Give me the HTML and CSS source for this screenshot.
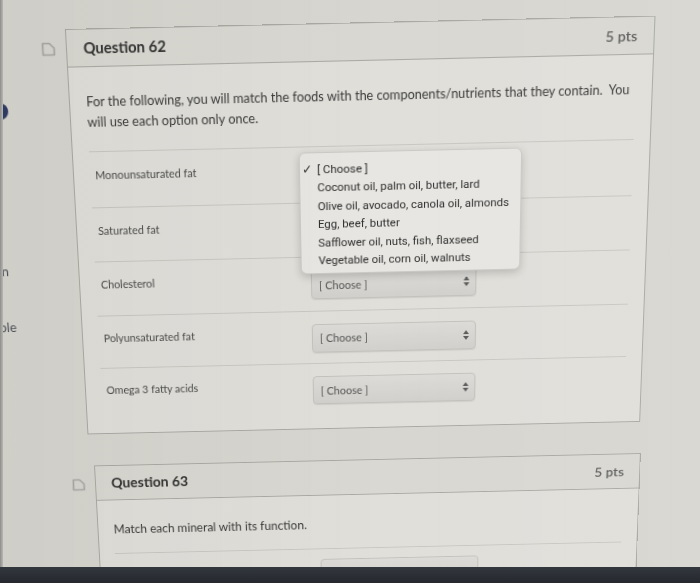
FILE: index.html
```html
<!DOCTYPE html>
<html lang="en">
<head>
<meta charset="utf-8">
<title>Quiz</title>
<link rel="stylesheet" href="styles.css">
</head>
<body>
<div class="screen">
  <div class="page">
    <aside class="sidebar">
      <span class="sb-dot"></span>
      <span class="sb-text sb-n">n</span>
      <span class="sb-text sb-ple">ple</span>
    </aside>
    <main class="quiz">
      <section class="question q62">
        <div class="flag">
          <svg width="14" height="14" viewBox="0 0 14 14"><path d="M1.5 1.5 H8 L12.5 6 V12.5 H1.5 Z" fill="none" stroke="#a6a6a4" stroke-width="1.6" stroke-linejoin="round"/></svg>
        </div>
        <div class="card">
          <header class="card-head">
            <h2 class="title">Question 62</h2>
            <span class="pts">5 pts</span>
          </header>
          <div class="card-body">
            <p class="intro">For the following, you will match the foods with the components/nutrients that they contain.&nbsp; You will use each option only once.</p>
            <div class="match-row">
              <div class="label">Monounsaturated fat</div>
              <div class="answer">
                <div class="select"><span>[ Choose ]</span><svg class="arrows" width="6" height="10" viewBox="0 0 6 10"><path d="M3 0 L6 4 H0 Z M3 10 L6 6 H0 Z" fill="#5a5a5a"/></svg></div>
                <div class="popup">
                  <div class="opt checked"><span class="check">✓</span>[ Choose ]</div>
                  <div class="opt">Coconut oil, palm oil, butter, lard</div>
                  <div class="opt">Olive oil, avocado, canola oil, almonds</div>
                  <div class="opt">Egg, beef, butter</div>
                  <div class="opt">Safflower oil, nuts, fish, flaxseed</div>
                  <div class="opt">Vegetable oil, corn oil, walnuts</div>
                </div>
              </div>
            </div>
            <div class="match-row">
              <div class="label">Saturated fat</div>
              <div class="answer">
                <div class="select"><span>[ Choose ]</span><svg class="arrows" width="6" height="10" viewBox="0 0 6 10"><path d="M3 0 L6 4 H0 Z M3 10 L6 6 H0 Z" fill="#5a5a5a"/></svg></div>
              </div>
            </div>
            <div class="match-row">
              <div class="label">Cholesterol</div>
              <div class="answer">
                <div class="select"><span>[ Choose ]</span><svg class="arrows" width="6" height="10" viewBox="0 0 6 10"><path d="M3 0 L6 4 H0 Z M3 10 L6 6 H0 Z" fill="#5a5a5a"/></svg></div>
              </div>
            </div>
            <div class="match-row">
              <div class="label">Polyunsaturated fat</div>
              <div class="answer">
                <div class="select"><span>[ Choose ]</span><svg class="arrows" width="6" height="10" viewBox="0 0 6 10"><path d="M3 0 L6 4 H0 Z M3 10 L6 6 H0 Z" fill="#5a5a5a"/></svg></div>
              </div>
            </div>
            <div class="match-row">
              <div class="label">Omega 3 fatty acids</div>
              <div class="answer">
                <div class="select"><span>[ Choose ]</span><svg class="arrows" width="6" height="10" viewBox="0 0 6 10"><path d="M3 0 L6 4 H0 Z M3 10 L6 6 H0 Z" fill="#5a5a5a"/></svg></div>
              </div>
            </div>
          </div>
        </div>
      </section>

      <section class="question q63">
        <div class="flag">
          <svg width="14" height="14" viewBox="0 0 14 14"><path d="M1.5 1.5 H8 L12.5 6 V12.5 H1.5 Z" fill="none" stroke="#a6a6a4" stroke-width="1.6" stroke-linejoin="round"/></svg>
        </div>
        <div class="card">
          <header class="card-head">
            <h2 class="title">Question 63</h2>
            <span class="pts">5 pts</span>
          </header>
          <div class="card-body">
            <p class="intro">Match each mineral with its function.</p>
            <div class="match-row">
              <div class="label"></div>
              <div class="answer">
                <div class="select"></div>
              </div>
            </div>
          </div>
        </div>
      </section>
    </main>
  </div>
</div>
<div class="bezel"></div>
</body>
</html>
```

FILE: styles.css
```css
* { box-sizing: border-box; }

html, body {
  margin: 0;
  padding: 0;
  width: 700px;
  height: 583px;
  overflow: hidden;
  background: #2a2d33;
}

body {
  display: flex;
  flex-direction: column;
  font-family: Lato, "Liberation Sans", sans-serif;
}

.screen {
  position: relative;
  width: 700px;
  height: 567px;
  flex: none;
  overflow: hidden;
  background: #d7d6d0;
}

.screen::before {
  content: "";
  position: absolute;
  left: 0;
  top: 0;
  bottom: 0;
  width: 3px;
  background: linear-gradient(90deg, #8d8d8b, #b9b8b3);
  z-index: 5;
}

.screen::after {
  content: "";
  position: absolute;
  inset: 0;
  background: linear-gradient(90deg, rgba(70, 65, 50, 0.05), rgba(255, 255, 255, 0) 55%, rgba(255, 255, 255, 0.06));
  pointer-events: none;
  z-index: 4;
}

.page {
  display: flex;
  width: 740px;
  height: 640px;
  background: #d7d6d0;
  transform-origin: 278px 225px;
  transform: perspective(1000px) rotate(-1.3deg) rotateX(-9.3deg);
}

/* ---------- sidebar remnants ---------- */
.sidebar {
  width: 10px;
  flex: none;
  display: flex;
  flex-direction: column;
  align-items: flex-end;
}

.sb-dot {
  align-self: flex-start;
  width: 16px;
  height: 16px;
  margin-top: 98px;
  border-radius: 50%;
  background: #2f3a66;
}

.sb-text {
  font-size: 13px;
  line-height: 16px;
  color: #4b4f58;
  white-space: nowrap;
}

.sb-n { margin-top: 144px; margin-right: 4px; }
.sb-ple { margin-top: 42px; margin-right: 0; }

/* ---------- quiz ---------- */
.quiz {
  flex: none;
  width: 660px;
  padding: 28px 0 0 42px;
}

.question {
  display: flex;
  align-items: flex-start;
  gap: 10px;
}

.q63 {
  margin-top: 34px;
  margin-left: 5px;
}

.flag {
  width: 14px;
  height: 36px;
  margin-top: 1px;
  display: flex;
  align-items: center;
}

.q63 .flag { height: 40px; }

.flag svg { display: block; }

.card {
  width: 572px;
  border: 1px solid #a9a8a3;
  background: #e0dfda;
}

.q63 .card { width: 569px; }

.card-head {
  height: 36px;
  display: flex;
  align-items: center;
  justify-content: space-between;
  padding: 0 16px;
  background: #d9d8d2;
  border-bottom: 1px solid #aaa9a4;
}

.q63 .card-head { height: 38px; }

.title {
  margin: 0;
  font-size: 14.5px;
  font-weight: 700;
  color: #333333;
}

.pts {
  font-size: 14px;
  font-weight: 600;
  color: #5a5a5a;
}

.card-body {
  padding: 24px 16px 14px;
}

.q63 .card-body { padding-top: 23px; }

.intro {
  margin: 0 0 18px;
  font-size: 12.5px;
  line-height: 20px;
  color: #3b3b3b;
}

.q63 .intro { margin-bottom: 16px; }

.match-row {
  display: flex;
  align-items: flex-start;
  height: 55.5px;
  padding: 13px 5px 0;
  border-top: 1px solid #c8c7c1;
}

.q63 .match-row { padding-top: 11px; }

.label {
  width: 212px;
  flex: none;
  padding-top: 1px;
  font-size: 10.8px;
  line-height: 18px;
  color: #4a4a4a;
}

.answer {
  position: relative;
  width: 167px;
}

.select {
  height: 30px;
  display: flex;
  align-items: center;
  justify-content: space-between;
  padding: 0 6px 0 7px;
  border: 1px solid #c3c2bd;
  border-radius: 4px;
  background: linear-gradient(#dcdbd7, #d1d0cc);
  box-shadow: 0 1px 1px rgba(0, 0, 0, 0.08);
  font-size: 11px;
  color: #555555;
}

.arrows { display: block; }

.popup {
  position: absolute;
  top: -8px;
  left: -10px;
  width: 221px;
  padding: 7px 0 4px;
  background: #e7e6e2;
  border: 1px solid rgba(0, 0, 0, 0.12);
  border-radius: 6px;
  box-shadow: 0 3px 9px rgba(0, 0, 0, 0.18);
  z-index: 3;
}

.opt {
  position: relative;
  padding-left: 17px;
  font-family: Roboto, "Noto Sans", sans-serif;
  font-size: 11.4px;
  line-height: 18.4px;
  color: #2e2e2e;
  white-space: nowrap;
}

.check {
  position: absolute;
  left: 2px;
  top: 0;
  font-family: "DejaVu Sans", sans-serif;
  font-size: 12.5px;
  font-weight: 700;
}

.bezel {
  flex: 1;
  background: linear-gradient(#33373e, #25282e);
}
```
